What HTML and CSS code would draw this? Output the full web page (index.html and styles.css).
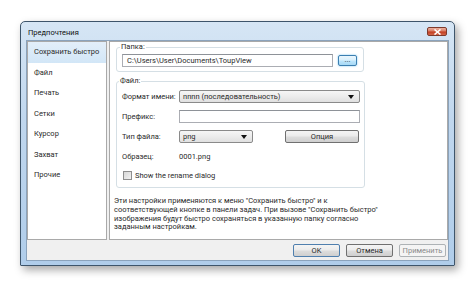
FILE: index.html
```html
<!DOCTYPE html>
<html lang="ru">
  <head>
    <meta charset="UTF-8" />
    <meta name="viewport" content="width=device-width, initial-scale=1.0" />
    <title>Предпочтения</title>
    <link rel="stylesheet" href="styles.css">
  </head>
  <body>
    <div class="window">
      <div class="titlebar">
        <span class="title">Предпочтения</span>
        <div class="close">
          <svg width="9" height="6" viewBox="0 0 9 6">
            <path d="M1.5 0.5 L7.5 5.5 M7.5 0.5 L1.5 5.5" stroke="#fff" stroke-width="1.6" />
          </svg>
        </div>
      </div>
      <div class="client">
        <div class="main">
          <div class="sidebar">
            <div class="item active">Сохранить быстро</div>
            <div class="item">Файл</div>
            <div class="item">Печать</div>
            <div class="item">Сетки</div>
            <div class="item">Курсор</div>
            <div class="item">Захват</div>
            <div class="item">Прочие</div>
          </div>
          <div class="panel">
            <fieldset class="group">
              <legend>Папка:</legend>
              <div class="row">
                <div class="edit path">C:\Users\User\Documents\ToupView</div>
                <div class="btn browse">...</div>
              </div>
            </fieldset>
            <fieldset class="group file">
              <legend>Файл:</legend>
              <div class="row">
                <span class="label">Формат имени:</span>
                <div class="combo wide">nnnn (последовательность)<i class="arrow"></i></div>
              </div>
              <div class="row">
                <span class="label">Префикс:</span>
                <div class="edit wide"></div>
              </div>
              <div class="row">
                <span class="label">Тип файла:</span>
                <div class="combo short">png<i class="arrow"></i></div>
                <div class="btn option">Опция</div>
              </div>
              <div class="row">
                <span class="label">Образец:</span>
                <span>0001.png</span>
              </div>
              <div class="row check">
                <span class="box"></span>
                <span>Show the rename dialog</span>
              </div>
            </fieldset>
            <p class="note">Эти настройки применяются к меню "Сохранить быстро" и к<br>соответствующей кнопке в панели задач. При вызове "Сохранить быстро"<br>изображения будут быстро сохраняться в указанную папку согласно<br>заданным настройкам.</p>
          </div>
        </div>
        <div class="footer">
          <div class="btn default">OK</div>
          <div class="btn">Отмена</div>
          <div class="btn disabled">Применить</div>
        </div>
      </div>
    </div>
  </body>
</html>
```

FILE: styles.css
```css
body {
  margin: 0;
  width: 474px;
  height: 289px;
  overflow: hidden;
  background: #ffffff;
  font-family: Roboto, "Noto Sans", sans-serif;
  font-size: 7.5px;
  color: #2a2a2a;
  padding: 21px 0 0 20px;
  box-sizing: border-box;
}
.window {
  width: 435px;
  height: 245px;
  box-sizing: border-box;
  border: 1px solid #3e556b;
  border-radius: 5px 5px 1px 1px;
  background: linear-gradient(180deg, #d6e6f5 0%, #c0d7ee 40%, #b0cdea 100%);
  box-shadow: 3px 4px 9px rgba(0, 0, 0, 0.35);
  display: flex;
  flex-direction: column;
  padding: 0 5px 4px 5px;
}
.titlebar {
  height: 18px;
  display: flex;
  justify-content: space-between;
  align-items: flex-start;
}
.title {
  padding: 6px 0 0 2px;
  line-height: 10px;
  color: #111;
}
.close {
  margin: 5px 2px 0 0;
  width: 20px;
  height: 9px;
  box-sizing: border-box;
  border: 1px solid #7d3a2c;
  border-radius: 2px;
  background: linear-gradient(180deg, #eab1a0 0%, #d87a62 45%, #c23e22 55%, #d2664a 100%);
  display: flex;
  justify-content: center;
  align-items: center;
}
.close svg {
  display: block;
}
.client {
  flex: 1;
  border: 1px solid #8ba3bc;
  background: #f0f0f0;
  display: flex;
  flex-direction: column;
}
.main {
  height: 199px;
  display: flex;
  gap: 2px;
}
.sidebar {
  width: 80px;
  box-sizing: border-box;
  border: 1px solid #a9a9a9;
  background: #fff;
}
.item {
  height: 20.5px;
  line-height: 20.5px;
  padding-left: 6px;
}
.item.active {
  background: linear-gradient(180deg, #e3effa 0%, #d2e6f7 100%);
}
.panel {
  flex: 1;
  box-sizing: border-box;
  border: 1px solid #a9a9a9;
  background: #fff;
  padding: 0 0 0 4px;
}
.group {
  width: 248px;
  box-sizing: border-box;
  margin: 0 0 0 2px;
  padding: 2px 4px 4px 5px;
  border: 1px solid #d5dfe5;
  border-radius: 3px;
}
.group legend {
  padding: 0 1px;
  margin-left: -2px;
  line-height: 10px;
}
.row {
  display: flex;
  align-items: center;
  height: 13px;
  white-space: nowrap;
}
.edit {
  height: 13px;
  box-sizing: border-box;
  border: 1px solid #abadb3;
  border-top-color: #8e9298;
  background: #fff;
  line-height: 11px;
  padding-left: 4px;
}
.path {
  width: 211px;
}
.btn {
  height: 13px;
  width: 47px;
  box-sizing: border-box;
  border: 1px solid #707070;
  border-radius: 2px;
  background: linear-gradient(180deg, #f4f4f4 0%, #ebebeb 48%, #dddddd 52%, #cfcfcf 100%);
  text-align: center;
  line-height: 11px;
}
.browse {
  width: 19px;
  height: 11px;
  line-height: 8px;
  margin-left: 5px;
  border-color: #3c7fb1;
  background: linear-gradient(180deg, #eaf6fd 0%, #d9f0fc 48%, #bee6fd 52%, #a7d9f5 100%);
  box-shadow: 0 0 2px #6fc0ee;
}
.file {
  margin-top: 4px;
  padding: 4px 4px 5px 4px;
}
.file .row {
  margin-bottom: 7px;
}
.file .row:nth-child(5) {
  margin-bottom: 6px;
}
.file .row.check {
  margin-bottom: 0;
}
.label {
  width: 57px;
  padding-left: 1px;
}
.combo {
  position: relative;
  height: 13px;
  box-sizing: border-box;
  border: 1px solid #8a8a8a;
  border-radius: 2px;
  background: linear-gradient(180deg, #f6f6f6 0%, #ececec 50%, #e0e0e0 100%);
  line-height: 11px;
  padding-left: 3px;
}
.wide {
  width: 181px;
}
.short {
  width: 74px;
}
.arrow {
  position: absolute;
  right: 5px;
  top: 4px;
  border-left: 3px solid transparent;
  border-right: 3px solid transparent;
  border-top: 4px solid #111;
}
.option {
  width: 74px;
  margin-left: 32px;
}
.check .box {
  width: 9px;
  height: 9px;
  box-sizing: border-box;
  border: 1px solid #8f8f8f;
  background: linear-gradient(135deg, #d8d8d8 0%, #f2f2f2 100%);
  margin: 0 3px 0 2px;
}
.note {
  margin: 9px 0 0 0;
  white-space: nowrap;
  line-height: 8.8px;
}
.footer {
  flex: 1;
  display: flex;
  justify-content: flex-end;
  align-items: center;
  gap: 6px;
  padding: 0 2px 0 0;
}
.default {
  border-color: #4f7fae;
}
.disabled {
  border-color: #adb2b5;
  background: #f4f4f4;
  color: #8a8a8a;
}
```
